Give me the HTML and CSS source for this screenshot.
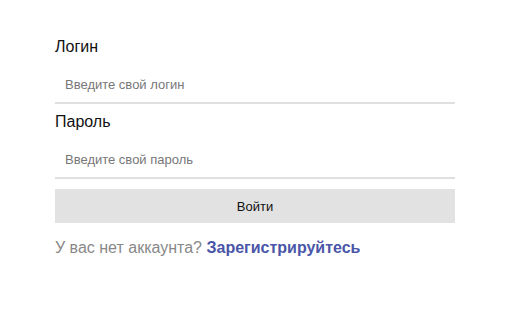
FILE: index.html
```html
<!DOCTYPE html>
<html lang="ru">
<head>
  <meta charset="UTF-8">
  <title>Вход</title>
  <link rel="stylesheet" href="styles.css">
</head>
<body>

<form class="login-form">
  <label for="login">Логин</label>
  <input id="login" type="text" placeholder="Введите свой логин">

  <label for="password" class="next">Пароль</label>
  <input id="password" type="password" placeholder="Введите свой пароль">

  <button type="submit">Войти</button>

  <p class="register">У вас нет аккаунта? <a href="#">Зарегистрируйтесь</a></p>
</form>

</body>
</html>
```

FILE: styles.css
```css
body {
  font-family: "Liberation Sans", Arial, sans-serif;
  margin: 0;
  background: #fff;
}

.login-form {
  width: 400px;
  margin: 38px auto 0;
}

label {
  display: block;
  font-size: 16px;
  line-height: 18px;
  color: #111;
}

label.next {
  margin-top: 9px;
}

input {
  display: block;
  width: 100%;
  box-sizing: border-box;
  height: 38px;
  margin: 10px 0 0;
  padding: 0 10px;
  border: none;
  border-bottom: 2px solid #e0e0e0;
  font-family: inherit;
  font-size: 13px;
  color: #333;
  outline: none;
}

input::placeholder {
  color: #777;
}

button {
  display: block;
  width: 100%;
  height: 34px;
  margin-top: 10px;
  padding-top: 1px;
  background-color: #e2e2e2;
  border: none;
  font-family: inherit;
  font-size: 13px;
  color: #111;
  cursor: pointer;
}

.register {
  margin: 16px 0 0;
  font-size: 16px;
  line-height: 18px;
  color: #888;
}

.register a {
  color: #4a56a8;
  font-weight: bold;
  text-decoration: none;
}
```
